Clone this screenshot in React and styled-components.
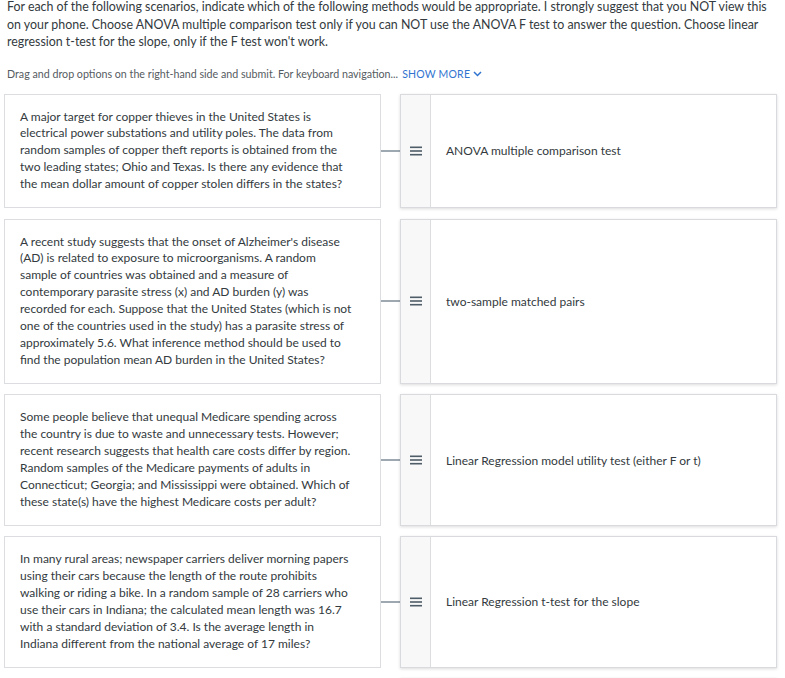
import React from "react";
import styled, { createGlobalStyle } from "styled-components";

const GlobalStyle = createGlobalStyle`
  html, body {
    margin: 0;
    padding: 0;
    background: #ffffff;
    overflow: hidden;
  }
  body {
    font-family: Lato, "Open Sans", sans-serif;
    color: #333333;
  }
`;

const Page = styled.div`
  width: 785px;
  height: 678px;
  overflow: hidden;
`;

const Prompt = styled.div`
  margin: -2px 0 0;
  padding: 0 7px;
  font-size: 12.4px;
  line-height: 17.5px;
  color: #333a40;
  white-space: nowrap;
`;

const Instructions = styled.div`
  margin-top: 16px;
  padding: 0 7px;
  font-size: 10.7px;
  line-height: 14px;
  color: #555b61;
  display: flex;
  align-items: center;
  gap: 4px;
`;

const ShowMore = styled.button`
  border: none;
  background: none;
  padding: 0;
  font: inherit;
  font-size: 10.5px;
  color: #2f74d0;
  letter-spacing: 0.2px;
  display: inline-flex;
  align-items: center;
  gap: 3px;
  cursor: pointer;
`;

const Board = styled.div`
  margin: 13px 0 0 4px;
  width: 773px;
  display: grid;
  grid-template-columns: 377px 19px 377px;
  row-gap: 10.5px;
`;

const Scenario = styled.div`
  border: 1px solid #dcdde0;
  padding: 14px 15px;
  font-size: 12px;
  line-height: 16.9px;
  color: #333a40;
  white-space: nowrap;
`;

const Connector = styled.div`
  display: flex;
  align-items: center;
  &::before {
    content: "";
    flex: 1;
    height: 2px;
    background: ${(p) => (p.$hidden ? "transparent" : "#9ea8b0")};
  }
`;

const Option = styled.div`
  display: flex;
  border: 1px solid #d9dadd;
  background: #ffffff;
  box-shadow: 0 1px 3px rgba(0, 0, 0, 0.14);
`;

const Handle = styled.div`
  width: 29px;
  flex: none;
  background: #f8f8f8;
  border-right: 1px solid #dcdde0;
  display: flex;
  align-items: center;
  justify-content: center;
`;

const OptionLabel = styled.div`
  flex: 1;
  display: flex;
  align-items: center;
  padding: 0 15px;
  font-size: 12px;
  color: #333a40;
`;

const Grip = () => (
  <svg width="12" height="10" viewBox="0 0 12 10">
    <rect x="0" y="0.5" width="12" height="1.6" fill="#4f5d68" />
    <rect x="0" y="4.2" width="12" height="1.6" fill="#4f5d68" />
    <rect x="0" y="7.9" width="12" height="1.6" fill="#4f5d68" />
  </svg>
);

const Chevron = () => (
  <svg width="9" height="6" viewBox="0 0 9 6">
    <path d="M1 1l3.5 3.5L8 1" fill="none" stroke="#2f74d0" strokeWidth="1.5" />
  </svg>
);

const promptLines = [
  "For each of the following scenarios, indicate which of the following methods would be appropriate. I strongly suggest that you NOT view this",
  "on your phone. Choose ANOVA multiple comparison test only if you can NOT use the ANOVA F test to answer the question. Choose linear",
  "regression t-test for the slope, only if the F test won't work.",
];

const rows = [
  {
    lines: [
      "A major target for copper thieves in the United States is",
      "electrical power substations and utility poles. The data from",
      "random samples of copper theft reports is obtained from the",
      "two leading states; Ohio and Texas. Is there any evidence that",
      "the mean dollar amount of copper stolen differs in the states?",
    ],
    option: "ANOVA multiple comparison test",
  },
  {
    lines: [
      "A recent study suggests that the onset of Alzheimer's disease",
      "(AD) is related to exposure to microorganisms. A random",
      "sample of countries was obtained and a measure of",
      "contemporary parasite stress (x) and AD burden (y) was",
      "recorded for each. Suppose that the United States (which is not",
      "one of the countries used in the study) has a parasite stress of",
      "approximately 5.6. What inference method should be used to",
      "find the population mean AD burden in the United States?",
    ],
    option: "two-sample matched pairs",
  },
  {
    lines: [
      "Some people believe that unequal Medicare spending across",
      "the country is due to waste and unnecessary tests. However;",
      "recent research suggests that health care costs differ by region.",
      "Random samples of the Medicare payments of adults in",
      "Connecticut; Georgia; and Mississippi were obtained. Which of",
      "these state(s) have the highest Medicare costs per adult?",
    ],
    option: "Linear Regression model utility test (either F or t)",
  },
  {
    lines: [
      "In many rural areas; newspaper carriers deliver morning papers",
      "using their cars because the length of the route prohibits",
      "walking or riding a bike. In a random sample of 28 carriers who",
      "use their cars in Indiana; the calculated mean length was 16.7",
      "with a standard deviation of 3.4. Is the average length in",
      "Indiana different from the national average of 17 miles?",
    ],
    option: "Linear Regression t-test for the slope",
  },
];

export default function App() {
  return (
    <Page>
      <GlobalStyle />
      <Prompt>
        {promptLines.map((l, i) => (
          <div key={i}>{l}</div>
        ))}
      </Prompt>
      <Instructions>
        <span>
          Drag and drop options on the right-hand side and submit. For keyboard
          navigation...
        </span>
        <ShowMore>
          SHOW MORE <Chevron />
        </ShowMore>
      </Instructions>
      <Board>
        {rows.map((row, i) => (
          <React.Fragment key={i}>
            <Scenario>
              {row.lines.map((l, j) => (
                <div key={j}>{l}</div>
              ))}
            </Scenario>
            <Connector />
            <Option>
              <Handle>
                <Grip />
              </Handle>
              <OptionLabel>{row.option}</OptionLabel>
            </Option>
          </React.Fragment>
        ))}
        <div />
        <Connector $hidden />
        <Option style={{ height: 60 }}>
          <Handle>
            <Grip />
          </Handle>
          <OptionLabel>two-sample t-test</OptionLabel>
        </Option>
      </Board>
    </Page>
  );
}
